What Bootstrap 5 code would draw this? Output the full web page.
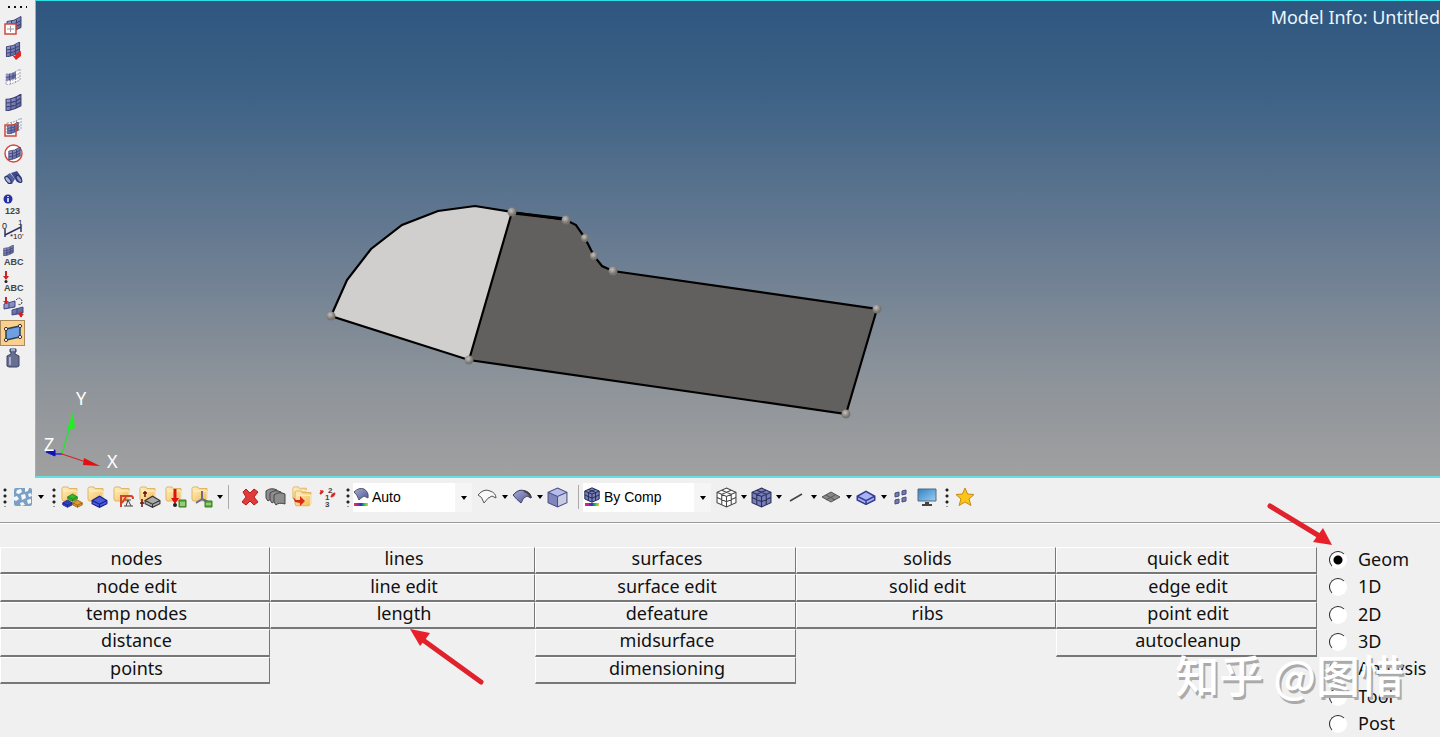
<!DOCTYPE html>
<html lang="en">
<head>
<meta charset="utf-8">
<meta name="viewport" content="width=device-width, initial-scale=1">
<title>Model Info: Untitled</title>
<link href="https://cdn.jsdelivr.net/npm/bootstrap@5.3.0/dist/css/bootstrap.min.css" rel="stylesheet">
<style>
body{background:#f0f0f0;color:#111;font-family:"Noto Sans","Noto Sans CJK SC",sans-serif;font-size:18px;line-height:24px}
.side-tools{width:35px;flex:none}
.side-stack{height:358px}
.grip-h{height:13px;padding-left:7px;line-height:0}
.tool{border:0;background:none;padding:0;width:26px;height:26px;flex:none;display:flex;align-items:center;justify-content:center}
.tool svg{flex:none}
.tool:hover{background:#fbe3b5}
.side-stack .tool{height:auto;flex:1 1 0}
.side-stack .tool.active{background:#fbcf8d;box-shadow:inset 0 0 0 1px #a98a5c;width:25px}
.caret{border:0;background:none;padding:0;width:9px;height:26px;flex:none;display:flex;align-items:center;justify-content:center}
.caret::before,.combo::after{content:"";border:3px solid transparent;border-top:4px solid #000;border-bottom:0}
.grip{width:10px;height:20px;flex:none;background:radial-gradient(circle,#222 1px,transparent 2px) 0 0/10px 6px}
.grip-gap{margin-left:2px}
.rule{width:1px;height:24px;background:#aaa;flex:none}
.viewport3d{min-width:0;border:1px solid #2be0e6;border-right:0;border-bottom-width:2px;border-bottom-color:#66dfe0;background:linear-gradient(#2e567f,#3e6286 20%,#667a91 50%,#8b9299 78%,#a0a0a0);overflow:hidden}
.info{color:#eaf6ff;right:0;top:4px;white-space:nowrap}
.scene{width:100%;height:475px}
.view-tools{height:38px;margin-bottom:6px}
.combo{position:relative;height:29px;flex:none;margin-right:2px;background:linear-gradient(90deg,#fff calc(100% - 17px),#f5f5f5 0)}
.combo::after{position:absolute;right:5px;top:13px;pointer-events:none}
.combo svg{position:absolute;left:0;top:4px;pointer-events:none}
.combo select{appearance:none;border:0;background:none;width:100%;height:27px;padding:0 18px 0 19px;font:14px "Liberation Sans",sans-serif;color:#000}
.combo-auto{width:119px}.combo-comp{width:128px}
.combo-comp select{padding-left:21px}
.panel{border-top:1px solid #999;box-shadow:inset 0 1px #fff;padding-top:24px;position:relative}
.menu-grid{display:grid;grid-template-columns:270fr 265fr 261fr 260fr 261fr 123fr;height:192px}
.menu-col{display:grid;grid-template-rows:repeat(7,1fr)}
.cell{border:solid;border-width:1px 1px 2px;border-color:#fff #777 #777 #fff;background:#f0f0f0;color:inherit;padding:0 0 4px 3px;line-height:20px;border-radius:0}
.cell:hover{background:#f6f6f6}
.page-choice{padding:0 0 4px 12px;gap:11px;line-height:20px;white-space:nowrap}
.page-choice input{appearance:none;width:18px;height:18px;margin:2px 0 0;border-radius:50%;border:1px solid;border-color:#222 #fff #fff #222;background:#fff;flex:none}
.page-choice input:checked{background:radial-gradient(circle,#000 4px,#fff 5px)}
.pointer{position:absolute;pointer-events:none}
.pointer-length{left:28.4%;top:105px}
.pointer-geom{left:88%;top:-20px}
.stamp{position:absolute;right:36px;bottom:35px;font-size:44px;font-weight:500;line-height:60px;color:#fff;text-shadow:2px 3px 0 #aaa;pointer-events:none;white-space:nowrap;font-family:"Noto Sans CJK SC",sans-serif}
</style>
<script src="https://cdn.jsdelivr.net/npm/bootstrap@5.3.0/dist/js/bootstrap.bundle.min.js"></script>
</head>
<body class="overflow-x-hidden">
<svg width="0" height="0" class="position-absolute" aria-hidden="true">
<defs>
<linearGradient id="blu" x1="0" y1="0" x2="1" y2="1"><stop stop-color="#a7acd8"/><stop offset="1" stop-color="#50568f"/></linearGradient>
<linearGradient id="fol" x1="0" y1="0" x2="1" y2="1"><stop stop-color="#fff0c0"/><stop offset="1" stop-color="#f3bd58"/></linearGradient>
<linearGradient id="scr" x1="0" y1="0" x2="1" y2="1"><stop stop-color="#3382c4"/><stop offset="1" stop-color="#9ccdf0"/></linearGradient>
<linearGradient id="bow"><stop stop-color="#e33"/><stop offset=".25" stop-color="#a2a"/><stop offset=".5" stop-color="#23c"/><stop offset=".75" stop-color="#2c5"/><stop offset="1" stop-color="#ec2"/></linearGradient>
<radialGradient id="ball" cx=".4" cy=".35"><stop stop-color="#c4c1bf"/><stop offset="1" stop-color="#77746f"/></radialGradient>
<symbol id="mesh" viewBox="0 0 16 16"><path d="M1 5Q8 5 15 0V11Q8 15 1 16Z" fill="url(#blu)"/><path d="M1 5Q8 5 15 0V11Q8 15 1 16ZM5.500 4.500V15M10.500 3V13.500M1 8.500Q8 8.500 15 4M1 12Q8 12 15 7.500" fill="none" stroke="#3a4075" stroke-width="1"/></symbol>
<symbol id="wire" viewBox="0 0 16 16"><path d="M1 5Q8 5 15 0V11Q8 15 1 16ZM5.500 4.500V15M10.500 3V13.500M1 8.500Q8 8.500 15 4M1 12Q8 12 15 7.500" fill="#fafafa" stroke="#889" stroke-width=".8" stroke-dasharray="2 1"/></symbol>
<symbol id="folder" viewBox="0 0 20 20"><path d="M1 2.500 2 1H7L8 2.500H16V13L14 15H2L1 13Z" fill="url(#fol)" stroke="#e0b566"/><path d="M3 5H16V14" fill="none" stroke="#fff3cf"/></symbol>
<symbol id="slab" viewBox="0 0 16 12"><path d="M1 5 8 1 15 5V8L8 11.500 1 8Z"/><path d="M1 5 8 8.500 15 5M8 8.500V11.500" fill="none"/></symbol>
<symbol id="cube" viewBox="0 0 20 20"><path d="M10 1 19 5V15L10 19 1 15V5Z"/><path d="M1 5 10 9 19 5M10 9V19M1 10 10 14 19 10M5.500 3 14.500 7V17M14.500 3 5.500 7V17" fill="none"/></symbol>
</defs>
</svg>

<div class="min-vh-100 d-flex flex-column">
<main class="d-flex flex-grow-1">
<nav class="side-tools" aria-label="Display tools">
<div class="grip-h"><svg width="20" height="13"><path d="M1 7H20" stroke="#111" stroke-width="2" stroke-dasharray="2 4"/></svg></div>
<div class="side-stack d-flex flex-column">
<button class="tool" aria-label="Mask"><svg width="18" height="20" viewBox="0 0 18 20"><use href="#mesh" x="2" y="0" width="16" height="17"/><path d="M1 8H12V18H1Z" fill="#fff" stroke="#d04a3d" stroke-width="1.500"/><path d="M3 13H10M6.500 10V16" stroke="#999"/></svg></button>
<button class="tool" aria-label="Reverse"><svg width="18" height="20" viewBox="0 0 18 20"><use href="#mesh" x="1" y="1" width="16" height="15"/><path d="M8 14 11 15 12 13 17 10V15L12 19Z" fill="#e52525"/></svg></button>
<button class="tool" aria-label="Unmask adjacent"><svg width="18" height="18" viewBox="0 0 18 18"><use href="#wire" x="1" y="1" width="16" height="16"/><path d="M2 6Q8 6 12 3V10Q8 12 2 13Z" fill="url(#blu)"/><path d="M2 9.500Q8 9 12 7M5.500 6V12M9 5V11" stroke="#454b7d" stroke-width=".9" fill="none"/></svg></button>
<button class="tool" aria-label="Unmask all"><svg width="17" height="17"><use href="#mesh"/></svg></button>
<button class="tool" aria-label="Mask outside"><svg width="18" height="20" viewBox="0 0 18 20"><use href="#wire" x="2" y="0" width="16" height="16"/><use href="#mesh" x="3" y="4" width="12" height="12"/><path d="M1 7H12V18H1Z" fill="none" stroke="#d04a3d" stroke-width="1.500"/></svg></button>
<button class="tool" aria-label="Spherical clipping"><svg width="19" height="19" viewBox="0 0 19 19"><circle cx="9.500" cy="9.500" r="8.500" fill="#fff" stroke="#d4493d" stroke-width="1.500"/><use href="#mesh" x="4" y="3" width="13" height="13"/></svg></button>
<button class="tool" aria-label="Find"><svg width="20" height="18" viewBox="0 0 20 18"><path d="M1 7 7 3 12 9 9 14 5 14Z" fill="#515fa0"/><path d="M8 3 14 1 19 8 18 13 14 12Z" fill="#3c4989"/><ellipse cx="5" cy="10" rx="2" ry="4" transform="rotate(-40 5 10)" fill="#a9b4dc" stroke="#252d5c"/><ellipse cx="16" cy="9" rx="2" ry="4" transform="rotate(-35 16 9)" fill="#8894c8" stroke="#252d5c"/></svg></button>
<button class="tool" aria-label="Numbers"><svg width="22" height="24" viewBox="0 0 22 24"><circle cx="6" cy="6" r="4.500" fill="#2530a8"/><path d="M6 3V4M6 5V9" stroke="#fff" stroke-width="1.500"/><text x="3" y="21" font-family="Liberation Sans" font-weight="700" font-size="9" fill="#444">123</text></svg></button>
<button class="tool" aria-label="Load scale"><svg width="22" height="24" viewBox="0 0 22 24"><path d="M3 11V19M19 7V14M3 17 19 9" stroke="#336" stroke-width="1.500"/><text x="0" y="11" font-family="Liberation Sans" font-size="9" fill="#222">0</text><text x="16" y="7" font-family="Liberation Sans" font-size="8" fill="#222">1</text><text x="8" y="21" font-family="Liberation Sans" font-size="8" fill="#222">*10'</text></svg></button>
<button class="tool" aria-label="Element handles"><svg width="22" height="24" viewBox="0 0 22 24"><use href="#mesh" x="1" y="1" width="11" height="11"/><text x="2" y="21" font-family="Liberation Sans" font-weight="700" font-size="9" fill="#444">ABC</text></svg></button>
<button class="tool" aria-label="Load handles"><svg width="22" height="24" viewBox="0 0 22 24"><path d="M4 1V7" stroke="#c22" stroke-width="2"/><path d="M1 6H7L4 10Z" fill="#c22"/><circle cx="4" cy="11.500" r="1.500" fill="#222"/><text x="2" y="21" font-family="Liberation Sans" font-weight="700" font-size="9" fill="#444">ABC</text></svg></button>
<button class="tool" aria-label="Move loads"><svg width="21" height="21" viewBox="0 0 21 21"><path d="M1 7 12 4V10L1 12ZM9 13 20 10V16L9 18Z" fill="url(#blu)" stroke="#414784"/><path d="M6 6V11M14 12V17" stroke="#414784"/><path d="M3 0V5M18 15V20" stroke="#c22" stroke-width="2"/><path d="M0 4H6L3 7ZM15 17H21L18 20Z" fill="#c22"/><path d="M13 3Q17-1 19 4M19 5Q18 9 15 7" fill="none" stroke="#333" stroke-dasharray="2 1"/></svg></button>
<button class="tool active" aria-label="Shade surfaces" aria-pressed="true"><svg width="20" height="20" viewBox="0 0 20 20"><path d="M3 6 17 3V14L3 17Z" fill="#6f9fe2" stroke="#245" stroke-width="1.500"/><g fill="#fff" stroke="#333"><circle cx="3" cy="6" r="1.600"/><circle cx="17" cy="3" r="1.600"/><circle cx="17" cy="14" r="1.600"/><circle cx="3" cy="17" r="1.600"/></g></svg></button>
<button class="tool" aria-label="Mass"><svg width="16" height="20" viewBox="0 0 16 20"><path d="M5 1H11V4H10V6L14 8V18L12 19H4L2 18V8L6 6V4H5Z" fill="#687092" stroke="#3c4263"/><path d="M5 9V17M6 2H10" stroke="#a7add0" stroke-width="2"/></svg></button>
</div>
</nav>

<section class="viewport3d position-relative flex-grow-1" aria-label="Model view">
<div class="info position-absolute">Model Info: Untitled</div>
<svg class="scene d-block" viewBox="36 1 1404 475" preserveAspectRatio="xMinYMin slice" role="img" aria-label="Sectioned surface model">
<path d="M331 316 347 280 371 249 402 225 438 211 475 206 512 212 469 360Z" fill="#d1cfce"/>
<path d="M512 212 566 220 576 225 585 238 594 256 602 266 613 271 877 309 846 414 469 360Z" fill="#62605e"/>
<path d="M331 316 347 280 371 249 402 225 438 211 475 206 512 212 566 220 576 225 585 238 594 256 602 266 613 271 877 309 846 414 469 360ZM512 212 469 360" fill="none" stroke="#000" stroke-width="2.200"/>
<path d="M513 213 566 219" stroke="#000" stroke-width="3"/>
<g fill="url(#ball)"><circle cx="331" cy="316" r="4.500"/><circle cx="512" cy="212" r="4.500"/><circle cx="566" cy="220" r="4.500"/><circle cx="585" cy="238" r="4"/><circle cx="594" cy="256" r="4"/><circle cx="613" cy="271" r="4.500"/><circle cx="877" cy="309" r="4.500"/><circle cx="846" cy="414" r="4.500"/><circle cx="469" cy="360" r="4.500"/></g>
<path d="M62 454 70 426" stroke="#25e32f" stroke-width="1.300"/><path d="M73 412 75 428 67 430Z" fill="#20f020"/>
<path d="M62 454 86 462" stroke="#d22" stroke-width="1.300"/><path d="M84 458 100 466 83 465Z" fill="#d11"/>
<path d="M62 454H52" stroke="#22c" stroke-width="1.300"/><path d="M46 452 55 450V456Z" fill="#11b" stroke="#11b"/>
<g fill="#fff" font-family="Noto Sans" font-size="18"><text x="76" y="405">Y</text><text x="107" y="468">X</text><text x="44" y="451">Z</text></g>
</svg>
</section>
</main>

<div class="view-tools d-flex align-items-center" role="toolbar" aria-label="View tools">
<span class="grip"></span>
<button class="tool" aria-label="Fit"><svg width="20" height="20" viewBox="0 0 20 20"><rect x="1" y="1" width="18" height="18" rx="2" fill="#7ba0c4"/><path d="M4 3 8 2 9 5 6 7 3 6ZM12 1H16L15 4 12 5ZM1 10 4 9 6 12 3 14 1 13ZM8 8 12 7 13 11 9 13ZM15 7 18 6 19 9 16 10ZM14 13 18 12V16L15 17ZM7 16 10 15 12 18 8 19Z" fill="#f4f8fc"/></svg></button><button class="caret" aria-label="Fit options"></button>
<span class="grip ms-1"></span>
<button class="tool" aria-label="Assembly"><svg width="22" height="22"><use href="#folder" width="20" height="20"/><g stroke-width="1"><use href="#slab" x="6" y="7" width="11" height="9" fill="#35b92c" stroke="#16711a"/><use href="#slab" x="1" y="13" width="11" height="9" fill="#303fc8" stroke="#111b7a"/><use href="#slab" x="11" y="13" width="11" height="9" fill="#e29a2b" stroke="#80500d"/></g></svg></button>
<button class="tool" aria-label="Component"><svg width="22" height="22"><use href="#folder" width="20" height="20"/><use href="#slab" x="4" y="9" width="17" height="13" fill="#4a5ce0" stroke="#161d86"/></svg></button>
<button class="tool" aria-label="Property"><svg width="22" height="22"><use href="#folder" width="20" height="20"/><path d="M8 21V10M7 10H18Q20 10 20 13M9 17 13 11" fill="none" stroke="#d2422d" stroke-width="2"/><path d="M11 20H20M12 14H18M15 14 13 20M15 14 18 20" stroke="#444"/></svg></button>
<button class="tool" aria-label="Material"><svg width="22" height="22"><use href="#folder" width="20" height="20"/><path d="M6 5V11M4 7H8M3 13V21M1 17H5" stroke="#611" stroke-width="1.500"/><use href="#slab" x="5" y="9" width="17" height="13" fill="#aaa" stroke="#333"/></svg></button>
<button class="tool" aria-label="Load collector"><svg width="22" height="22"><use href="#folder" width="20" height="20"/><path d="M10 3V13" stroke="#d11" stroke-width="3"/><path d="M6 12H14L10 18Z" fill="#d11"/><circle cx="10" cy="19" r="2" fill="#222"/><path d="M14 14H21V21H14Z" fill="#5dad3b" stroke="#387a20"/><path d="M15 17H20M15 19H20" stroke="#cdeabf"/></svg></button>
<button class="tool" aria-label="System collector"><svg width="22" height="22"><use href="#folder" width="20" height="20"/><path d="M11 5V13L5 17M11 13 17 16" fill="none" stroke="#676d91" stroke-width="2"/><path d="M14 15H21V21H14Z" fill="#5dad3b" stroke="#387a20"/><path d="M15 18H20" stroke="#cdeabf"/></svg></button><button class="caret" aria-label="More collectors"></button>
<span class="rule mx-1"></span>
<button class="tool ms-1" aria-label="Delete"><svg width="18" height="18"><path d="M2 4 5 1 9 5 13 1 17 4 13 9 17 14 13 17 9 13 5 17 1 14 5 9Z" fill="#e13a3a" stroke="#b51d1d"/></svg></button>
<button class="tool" aria-label="Card edit"><svg width="22" height="20"><g fill="#8d8d8d" stroke="#444"><path d="M1 4Q6 0 12 3V13Q6 11 3 14L1 11Z"/><path d="M5 6Q10 2 16 5V15Q10 13 7 16L5 13Z"/><path d="M9 8Q14 4 20 7V17Q14 15 11 18L9 15Z"/></g></svg></button>
<button class="tool" aria-label="Organize"><svg width="22" height="22"><use href="#folder" x="1" width="18" height="18"/><use href="#folder" x="3" y="4" width="21" height="21"/><path d="M2 11 5 14H9V10L14 15 9 20V17L4 16Z" fill="#da2d18"/></svg></button>
<button class="tool" aria-label="Renumber"><svg width="20" height="22" viewBox="0 0 20 22"><g font-family="Liberation Sans" font-size="8" font-weight="700" fill="#444"><text x="10" y="7">2</text><text x="7" y="14">1</text><text x="7" y="21">3</text></g><path d="M2 8 5 5M13 11 17 7" stroke="#d22" stroke-width="2"/><path d="M3 8 2 4 6 5ZM13 8 17 7 16 11Z" fill="#d22"/></svg></button>
<span class="grip grip-gap"></span>
<div class="combo combo-auto"><svg width="18" height="22"><path d="M1 5Q6 0 11 2Q16 5 15 11L11 9Q8 11 6 13Q4 7 1 5Z" fill="url(#blu)" stroke="#556"/><rect x="1" y="16" width="14" height="3" fill="url(#bow)"/></svg><select aria-label="Geometry color"><option>Auto</option></select></div>
<button class="tool" aria-label="Wireframe geometry"><svg width="20" height="18"><path d="M1 7Q7 0 13 3Q19 5 19 10L15 8Q11 9 7 15Q5 8 1 7Z" fill="#fafafa" stroke="#555"/></svg></button><button class="caret" aria-label="Wireframe options"></button>
<button class="tool" aria-label="Shaded geometry"><svg width="20" height="18"><path d="M1 7Q7 0 13 3Q19 5 19 10L15 8Q11 9 9 15Q5 12 1 7Z" fill="url(#blu)" stroke="#3a3f70"/><path d="M12 3Q18 5 19 10" fill="none" stroke="#444" stroke-width="2"/></svg></button><button class="caret" aria-label="Shading options"></button>
<button class="tool" aria-label="Transparency"><svg width="21" height="21" viewBox="0 0 20 20"><path d="M10 1 19 5V15L10 19 1 15V5Z" fill="#7f86bd"/><path d="M10 1 19 5 10 9 1 5Z" fill="#b6bcec"/><path d="M10 9 19 5V15L10 19Z" fill="#c9cbe2"/><path d="M10 1 19 5V15L10 19 1 15V5ZM1 5 10 9 19 5M10 9V19" fill="none" stroke="#4c5286"/></svg></button>
<span class="rule ms-2 me-1"></span>
<div class="combo combo-comp"><svg width="18" height="22"><use href="#cube" x="1" width="16" height="16" fill="#7880b8" stroke="#222952" stroke-width="1.200"/><rect x="2" y="16" width="14" height="3" fill="url(#bow)"/></svg><select aria-label="Element color"><option>By Comp</option></select></div>
<button class="tool" aria-label="Wireframe elements"><svg width="21" height="21"><use href="#cube" fill="#fff" stroke="#444"/></svg></button><button class="caret" aria-label="Wireframe element options"></button>
<button class="tool" aria-label="Shaded elements"><svg width="21" height="21"><use href="#cube" fill="#777eb8" stroke="#292e58"/></svg></button><button class="caret" aria-label="Shaded element options"></button>
<button class="tool" aria-label="1D display"><svg width="14" height="10"><path d="M1 9 13 2" stroke="#444" stroke-width="1.600"/></svg></button><button class="caret" aria-label="1D options"></button>
<button class="tool" aria-label="2D display"><svg width="20" height="12"><path d="M1 6 10 1 19 6 10 11Z" fill="#898989" stroke="#555"/><path d="M5 4 14 9M14 4 5 9" stroke="#555"/></svg></button><button class="caret" aria-label="2D options"></button>
<button class="tool" aria-label="Layer display"><svg width="20" height="15"><use href="#slab" fill="#a9b2f5" stroke="#343d91" stroke-width="1.200"/></svg></button><button class="caret" aria-label="Layer options"></button>
<button class="tool" aria-label="Shrink"><svg width="16" height="18"><g fill="#777eaf" stroke="#454b7b"><path d="M2 5 6 4V8L2 9ZM9 3 13 2V6L9 7ZM2 12 6 11V15L2 16ZM9 10 13 9V13L9 14Z"/></g></svg></button>
<button class="tool" aria-label="Screen"><svg width="20" height="20"><path d="M1 2H19V14H1Z" fill="url(#scr)" stroke="#536b83"/><path d="M8 15H12V17H15V19H5V17H8Z" fill="#444"/></svg></button>
<span class="grip grip-gap"></span>
<button class="tool" aria-label="Favorites"><svg width="20" height="20"><path d="M10 1 12.600 7 19 7.500 14 12 16 18.500 10 15 4 18.500 6 12 1 7.500 7.400 7Z" fill="#fcc619" stroke="#c58b12"/></svg></button>
</div>

<section class="panel" aria-label="Main menu">
<div class="menu-grid">
<div class="menu-col"><button class="cell">nodes</button><button class="cell">node edit</button><button class="cell">temp nodes</button><button class="cell">distance</button><button class="cell">points</button></div>
<div class="menu-col"><button class="cell">lines</button><button class="cell">line edit</button><button class="cell">length</button></div>
<div class="menu-col"><button class="cell">surfaces</button><button class="cell">surface edit</button><button class="cell">defeature</button><button class="cell">midsurface</button><button class="cell">dimensioning</button></div>
<div class="menu-col"><button class="cell">solids</button><button class="cell">solid edit</button><button class="cell">ribs</button></div>
<div class="menu-col"><button class="cell">quick edit</button><button class="cell">edge edit</button><button class="cell">point edit</button><button class="cell">autocleanup</button></div>
<div class="menu-col">
<label class="page-choice d-flex align-items-center"><input type="radio" name="page" checked>Geom</label>
<label class="page-choice d-flex align-items-center"><input type="radio" name="page">1D</label>
<label class="page-choice d-flex align-items-center"><input type="radio" name="page">2D</label>
<label class="page-choice d-flex align-items-center"><input type="radio" name="page">3D</label>
<label class="page-choice d-flex align-items-center"><input type="radio" name="page">Analysis</label>
<label class="page-choice d-flex align-items-center"><input type="radio" name="page">Tool</label>
<label class="page-choice d-flex align-items-center"><input type="radio" name="page">Post</label>
</div>
</div>
<svg class="pointer pointer-length" width="76" height="58" aria-hidden="true"><path d="M72 54 14 12" stroke="#e0222c" stroke-width="5" stroke-linecap="round"/><path d="M1 1 21 5 16 12 11 18Z" fill="#e8202a"/></svg>
<svg class="pointer pointer-geom" width="68" height="44" aria-hidden="true"><path d="M3 3 54 34" stroke="#e0222c" stroke-width="5" stroke-linecap="round"/><path d="M65 42 46 39 51 32 56 25Z" fill="#e8202a"/></svg>
<div class="stamp">知乎 @图惜</div>
</section>
</div>
</body>
</html>
